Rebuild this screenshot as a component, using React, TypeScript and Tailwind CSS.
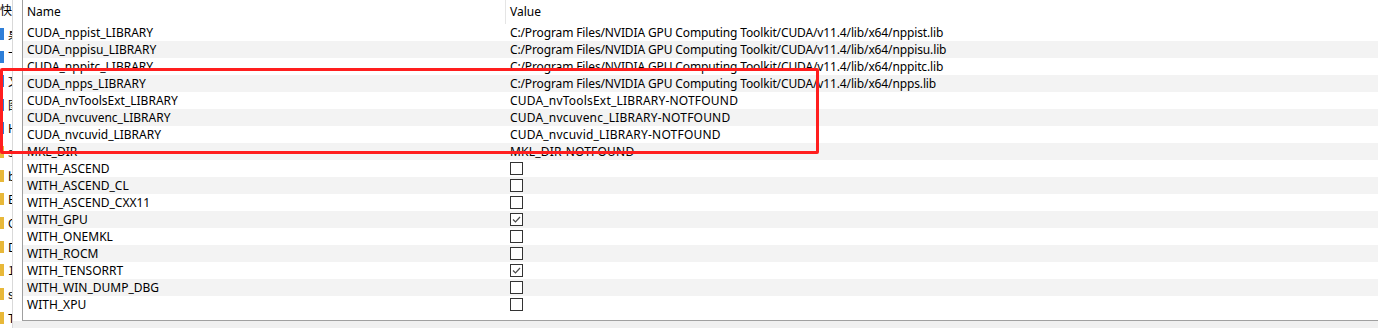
const NV = "C:/Program Files/NVIDIA GPU Computing Toolkit/CUDA/v11.4/lib/x64/";

type Row = { name: string; value?: string; check?: boolean };

const rows: Row[] = [
  { name: "CUDA_nppist_LIBRARY", value: NV + "nppist.lib" },
  { name: "CUDA_nppisu_LIBRARY", value: NV + "nppisu.lib" },
  { name: "CUDA_nppitc_LIBRARY", value: NV + "nppitc.lib" },
  { name: "CUDA_npps_LIBRARY", value: NV + "npps.lib" },
  { name: "CUDA_nvToolsExt_LIBRARY", value: "CUDA_nvToolsExt_LIBRARY-NOTFOUND" },
  { name: "CUDA_nvcuvenc_LIBRARY", value: "CUDA_nvcuvenc_LIBRARY-NOTFOUND" },
  { name: "CUDA_nvcuvid_LIBRARY", value: "CUDA_nvcuvid_LIBRARY-NOTFOUND" },
  { name: "MKL_DIR", value: "MKL_DIR-NOTFOUND" },
  { name: "WITH_ASCEND", check: false },
  { name: "WITH_ASCEND_CL", check: false },
  { name: "WITH_ASCEND_CXX11", check: false },
  { name: "WITH_GPU", check: true },
  { name: "WITH_ONEMKL", check: false },
  { name: "WITH_ROCM", check: false },
  { name: "WITH_TENSORRT", check: true },
  { name: "WITH_WIN_DUMP_DBG", check: false },
  { name: "WITH_XPU", check: false },
];

// the explorer tree on the far left, mostly scrolled out of view
const side: { icon?: string; ch: string }[] = [
  { ch: "快" },
  { icon: "#2f7fd8", ch: "桌" },
  { icon: "#2f7fd8", ch: "下" },
  { icon: "#2f7fd8", ch: "文" },
  { icon: "#2f7fd8", ch: "图" },
  { icon: "#2f7fd8", ch: "H" },
  { icon: "#e8b839", ch: "s" },
  { icon: "#e8b839", ch: "b" },
  { icon: "#e8b839", ch: "E" },
  { icon: "#e8b839", ch: "C" },
  { icon: "#e8b839", ch: "D" },
  { icon: "#e8b839", ch: "1" },
  { icon: "#e8b839", ch: "s" },
  { icon: "#e8b839", ch: "T" },
];

function CheckBox({ on }: { on: boolean }) {
  return (
    <div className="w-[13px] h-[13px] border border-[#333333] bg-white flex items-center justify-center">
      {on && (
        <svg width="11" height="11" viewBox="0 0 11 11">
          <path d="M2 5.5 L4.5 8 L9 3" fill="none" stroke="#4a4a4a" strokeWidth="1.2" />
        </svg>
      )}
    </div>
  );
}

export default function App() {
  return (
    <div className="relative w-[1378px] h-[328px] flex bg-white overflow-hidden text-[12px] text-black font-['Segoe_UI','Noto_Sans','Noto_Sans_CJK_SC',sans-serif]">
      <div className="w-[13px] shrink-0 border-r border-[#d9d9d9] overflow-hidden">
        <div className="-mt-[2px] flex flex-col">
          {side.map((s, i) => (
            <div key={i} className="h-[23.7px] flex items-center whitespace-nowrap">
              {s.icon ? (
                <>
                  <span className="w-[4px] h-[12px] shrink-0" style={{ background: s.icon }} />
                  <span className="ml-[4px] font-['Noto_Sans_CJK_SC',sans-serif]">{s.ch}</span>
                </>
              ) : (
                <span className="font-['Noto_Sans_CJK_SC',sans-serif]">{s.ch}</span>
              )}
            </div>
          ))}
        </div>
      </div>

      <div className="flex-1 flex flex-col">
        <div className="h-[321px] flex">
          <div className="w-[9px] bg-white" />
          <div className="flex-1 border-l border-b border-[#a0a0a0] bg-white">
            <div className="h-[24px] flex">
              <div className="w-[483px] pl-[4px] flex items-center border-r border-[#e5e5e5]">Name</div>
              <div className="flex-1 pl-[4px] flex items-center">Value</div>
            </div>
            {rows.map((r, i) => (
              <div key={r.name} className={`h-[17px] flex items-center ${i % 2 ? "bg-[#f3f3f3]" : "bg-white"}`}>
                <div className="w-[484px] pl-[4px] whitespace-nowrap">{r.name}</div>
                {r.value === undefined ? (
                  <div className="flex-1 pl-[3px]">
                    <CheckBox on={!!r.check} />
                  </div>
                ) : r.value.startsWith("C:/") ? (
                  <div className="flex-1 pl-[3px] whitespace-nowrap tracking-[-0.13px]">{r.value}</div>
                ) : (
                  <div className="flex-1 pl-[3px] whitespace-nowrap tracking-[0.2px]">{r.value}</div>
                )}
              </div>
            ))}
          </div>
        </div>
        <div className="flex-1 bg-[#f0f0f0]" />
      </div>

      <div className="absolute left-0 top-[68px] w-[819px] h-[86px] border-[3px] border-[#ff1e1e] rounded-[2px]" />
    </div>
  );
}
